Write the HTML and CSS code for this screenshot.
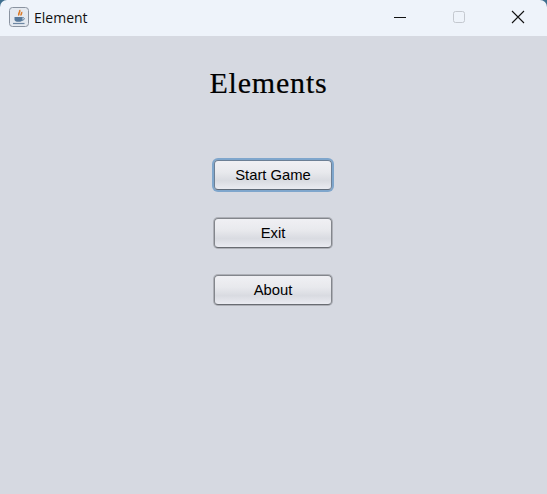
FILE: index.html
```html
<!DOCTYPE html>
<html lang="en">
<head>
    <meta charset="UTF-8">
    <title>Element</title>
    <link rel="stylesheet" href="styles.css">
</head>
<body>
    <div class="titlebar">
        <svg class="app-icon" width="20" height="20" viewBox="0 0 20 20">
            <rect x="0.5" y="0.5" width="19" height="19" rx="3" fill="#e4e9f0" stroke="#8a93a0"/>
            <path d="M10.500 3c1.500 2-2 3-.5 5.500M12.500 5c.8 1.500-1 2-.4 3.500" fill="none" stroke="#dd7a26" stroke-width="1.600"/>
            <path d="M5.500 10h8v2.500c0 1.500-1.500 2.300-4 2.300s-4-.8-4-2.300z" fill="#56789a"/>
            <path d="M13.500 10.500c2.500 0 2.500 2.500-.5 2.800" fill="none" stroke="#56789a"/>
            <path d="M4 16.500h11.500" stroke="#6d87a3" stroke-width="1.200"/>
        </svg>
        <span class="window-title">Element</span>
        <div class="window-controls">
            <svg class="control" width="14" height="14" viewBox="0 0 14 14"><path d="M1 7.500h12" stroke="#111" stroke-width="1"/></svg>
            <svg class="control" width="14" height="14" viewBox="0 0 14 14"><rect x="1.500" y="1.500" width="11" height="11" rx="2" fill="none" stroke="#c4c8cf"/></svg>
            <svg class="control" width="14" height="14" viewBox="0 0 14 14"><path d="M1 1l12 12M13 1L1 13" stroke="#111" stroke-width="1.100"/></svg>
        </div>
    </div>
    <div class="content">
        <h1 class="heading">Elements</h1>
        <button class="btn btn-focus">Start Game</button>
        <button class="btn">Exit</button>
        <button class="btn">About</button>
    </div>
</body>
</html>
```

FILE: styles.css
```css
html, body {
    height: 100%;
}

body {
    margin: 0;
    display: flex;
    flex-direction: column;
    background-color: #3f6f8f;
    overflow: hidden;
}

.titlebar {
    height: 36px;
    background-color: #eef3fa;
    border-radius: 7px 7px 0 0;
    display: flex;
    align-items: center;
    padding: 0 0 2px 9px;
    box-sizing: border-box;
    flex-shrink: 0;
}

.app-icon {
    margin-right: 5px;
}

.window-title {
    font-family: "Open Sans", "Noto Sans", sans-serif;
    font-size: 14px;
    color: #111;
}

.window-controls {
    margin-left: auto;
    display: flex;
    gap: 45px;
    padding-right: 22px;
}

.content {
    flex: 1;
    background-color: #d6d9e1;
    display: flex;
    flex-direction: column;
    align-items: center;
}

.heading {
    font-family: "Liberation Serif", serif;
    font-size: 30px;
    font-weight: normal;
    color: #000;
    letter-spacing: 0.8px;
    -webkit-text-stroke: 0.2px #000;
    line-height: 34px;
    margin: 30px 10px 60px 0;
}

.btn {
    width: 118px;
    height: 30px;
    margin: 0 1px 27.5px 0;
    font-family: "Liberation Sans", sans-serif;
    font-size: 14.8px;
    color: #000;
    border: 1px solid #83868c;
    border-bottom-color: #696c72;
    border-radius: 4px;
    box-shadow: 0 0 0 1px #aeb0b7;
    background: linear-gradient(#f0f0f4, #e8e9ed 40%, #d9dbe1 70%, #eaebf1);
    padding: 0;
}

.btn-focus {
    border-color: #6c7f95;
    border-bottom-color: #5f6a78;
    box-shadow: 0 0 0 2px #7fa6cc;
}
```
